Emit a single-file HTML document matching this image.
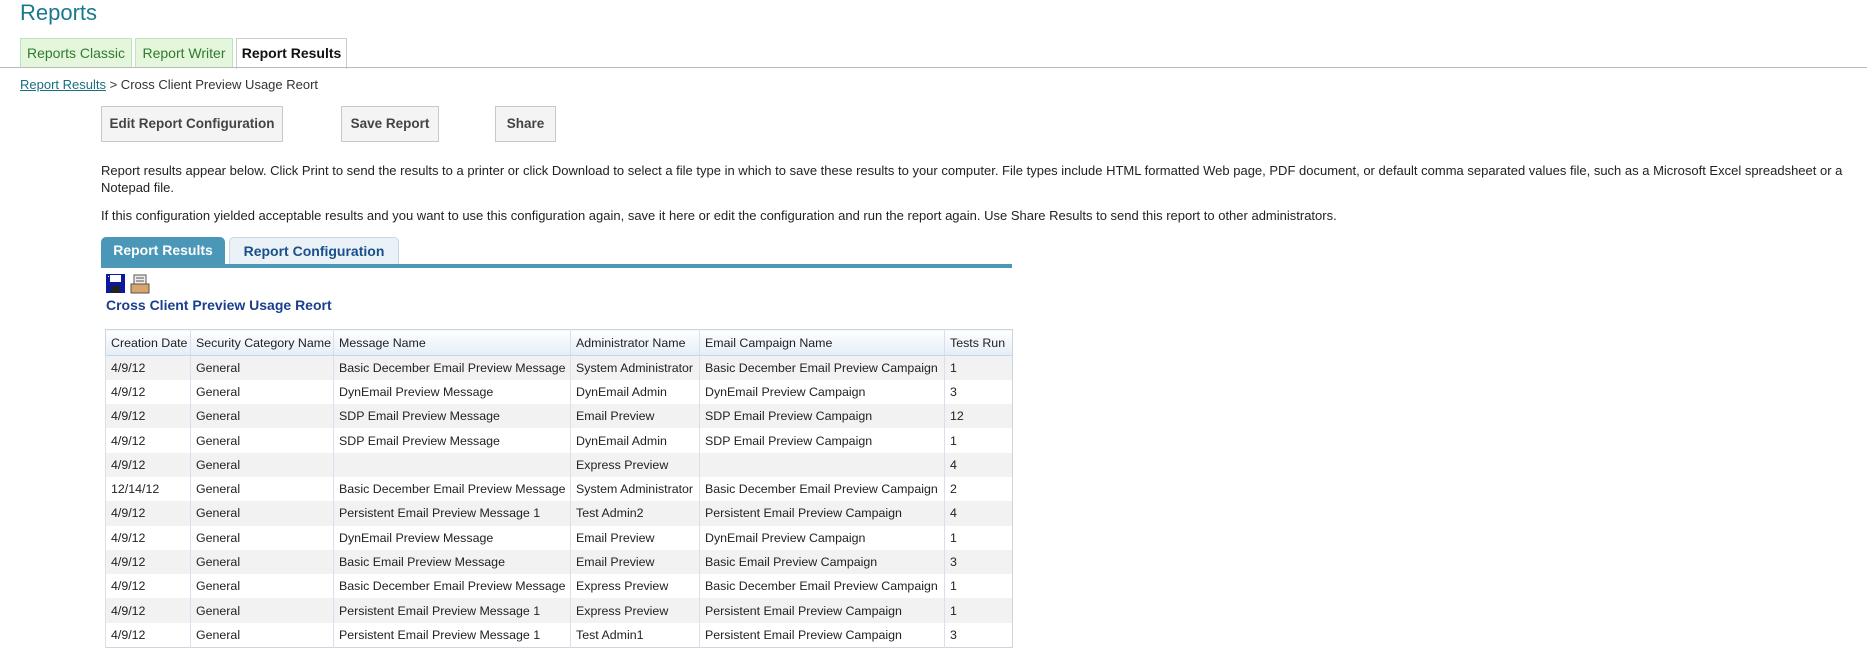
<!DOCTYPE html>
<html><head><meta charset="utf-8"><style>
*{margin:0;padding:0;box-sizing:border-box}
body{width:1867px;height:663px;background:#fff;font-family:"Liberation Sans",Arial,sans-serif;color:#222;position:relative;overflow:hidden;font-size:13px}
.abs{position:absolute}
h1{position:absolute;left:20px;top:0;font-size:22px;font-weight:normal;color:#1a7a8c}
.tab{position:absolute;top:38px;height:30px;border:1px solid #bfe3bf;border-bottom:none;background:#e4f7dc;color:#2f7a2f;font-size:14px;line-height:28px;text-align:center}
.line{position:absolute;left:0;top:67px;width:1867px;height:1px;background:#bbb}
.btn{position:absolute;top:106px;height:36px;border:1px solid #c8c8c8;background:#f4f4f4;font-weight:bold;font-size:13.5px;color:#444;text-align:center;line-height:34px}
p{position:absolute;left:101px;font-size:13px;line-height:17px;color:#222}
.itab{position:absolute;top:237px;height:28px;border-radius:5px 5px 0 0;font-weight:bold;font-size:14px;line-height:27px;text-align:center}
table{position:absolute;left:105px;top:329px;width:907px;border-collapse:collapse;border:1px solid #c9d6e3;font-size:12.4px;table-layout:fixed}
td,th{height:24.3px;padding:0 0 0 5px;text-align:left;font-weight:normal;white-space:nowrap;overflow:hidden;border-left:1px solid #dde;}
th{height:26px;background:linear-gradient(#fff,#e3edf7);border-bottom:1px solid #c9d6e3}
tr:nth-child(even) td{background:#f2f2f2}
</style></head><body>
<h1>Reports</h1>
<div class="tab" style="left:20px;width:112px">Reports Classic</div>
<div class="tab" style="left:135px;width:98px">Report Writer</div>
<div class="tab" style="left:236px;width:111px;background:#fff;border-color:#ccc;color:#111;font-weight:bold;height:31px">Report Results</div>
<div class="line"></div>
<div class="abs" style="left:20px;top:77px;font-size:13px;color:#333"><span style="color:#1a6f80;text-decoration:underline">Report Results</span> &gt; Cross Client Preview Usage Reort</div>
<div class="btn" style="left:101px;width:182px">Edit Report Configuration</div>
<div class="btn" style="left:341px;width:98px">Save Report</div>
<div class="btn" style="left:495px;width:61px">Share</div>
<p style="top:162px;width:1760px">Report results appear below. Click Print to send the results to a printer or click Download to select a file type in which to save these results to your computer. File types include HTML formatted Web page, PDF document, or default comma separated values file, such as a Microsoft Excel spreadsheet or a Notepad file.</p>
<p style="top:207px">If this configuration yielded acceptable results and you want to use this configuration again, save it here or edit the configuration and run the report again. Use Share Results to send this report to other administrators.</p>
<div class="itab" style="left:101px;width:124px;background:#4a97b8;color:#fff">Report Results</div>
<div class="itab" style="left:229px;width:170px;background:#eaf2f8;border:1px solid #c5d8e6;color:#1a4f8a">Report Configuration</div>
<div class="abs" style="left:101px;top:264px;width:911px;height:4px;background:#4a97b8"></div>
<svg class="abs" style="left:106px;top:274px" width="44" height="20">
<rect x="0" y="0" width="19" height="19" fill="#0a1a9a"/><rect x="4" y="1" width="11" height="7" fill="#fff"/><rect x="5" y="12" width="9" height="7" fill="#222"/><rect x="2" y="2" width="1" height="1" fill="#fff"/>
<rect x="28" y="1" width="12" height="9" fill="#eee" stroke="#555"/><line x1="30" y1="4" x2="38" y2="4" stroke="#555"/><line x1="30" y1="7" x2="38" y2="7" stroke="#555"/><rect x="25" y="10" width="18" height="9" fill="#d9a56b" stroke="#555"/></svg>
<div class="abs" style="left:106px;top:297px;font-weight:bold;font-size:14px;color:#1a3f8f">Cross Client Preview Usage Reort</div>
<table>
<colgroup><col style="width:85px"><col style="width:143px"><col style="width:237px"><col style="width:129px"><col style="width:245px"><col style="width:68px"></colgroup>
<tr><th style="border-left:none">Creation Date</th><th>Security Category Name</th><th>Message Name</th><th>Administrator Name</th><th>Email Campaign Name</th><th>Tests Run</th></tr>
<tr><td>4/9/12</td><td>General</td><td>Basic December Email Preview Message</td><td>System Administrator</td><td>Basic December Email Preview Campaign</td><td>1</td></tr>
<tr><td>4/9/12</td><td>General</td><td>DynEmail Preview Message</td><td>DynEmail Admin</td><td>DynEmail Preview Campaign</td><td>3</td></tr>
<tr><td>4/9/12</td><td>General</td><td>SDP Email Preview Message</td><td>Email Preview</td><td>SDP Email Preview Campaign</td><td>12</td></tr>
<tr><td>4/9/12</td><td>General</td><td>SDP Email Preview Message</td><td>DynEmail Admin</td><td>SDP Email Preview Campaign</td><td>1</td></tr>
<tr><td>4/9/12</td><td>General</td><td></td><td>Express Preview</td><td></td><td>4</td></tr>
<tr><td>12/14/12</td><td>General</td><td>Basic December Email Preview Message</td><td>System Administrator</td><td>Basic December Email Preview Campaign</td><td>2</td></tr>
<tr><td>4/9/12</td><td>General</td><td>Persistent Email Preview Message 1</td><td>Test Admin2</td><td>Persistent Email Preview Campaign</td><td>4</td></tr>
<tr><td>4/9/12</td><td>General</td><td>DynEmail Preview Message</td><td>Email Preview</td><td>DynEmail Preview Campaign</td><td>1</td></tr>
<tr><td>4/9/12</td><td>General</td><td>Basic Email Preview Message</td><td>Email Preview</td><td>Basic Email Preview Campaign</td><td>3</td></tr>
<tr><td>4/9/12</td><td>General</td><td>Basic December Email Preview Message</td><td>Express Preview</td><td>Basic December Email Preview Campaign</td><td>1</td></tr>
<tr><td>4/9/12</td><td>General</td><td>Persistent Email Preview Message 1</td><td>Express Preview</td><td>Persistent Email Preview Campaign</td><td>1</td></tr>
<tr><td>4/9/12</td><td>General</td><td>Persistent Email Preview Message 1</td><td>Test Admin1</td><td>Persistent Email Preview Campaign</td><td>3</td></tr>
</table>
</body></html>
